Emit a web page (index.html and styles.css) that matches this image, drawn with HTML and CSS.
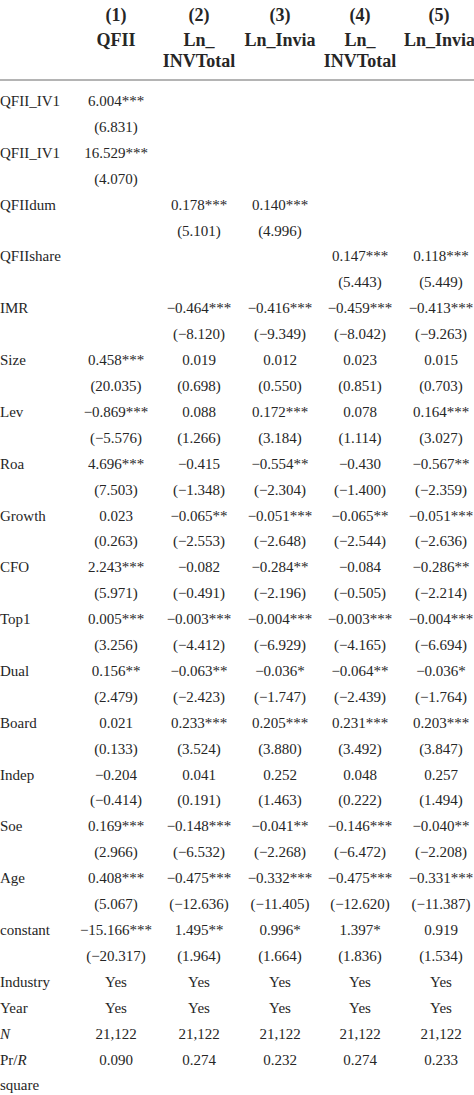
FILE: index.html
```html
<!DOCTYPE html>
<html lang="en">
<head>
<meta charset="utf-8">
<title>Regression table</title>
<link rel="stylesheet" href="styles.css">
</head>
<body>
<div class="table">
  <div class="head">
    <div class="hc"></div>
    <div class="hc"><div class="num">(1)</div><div>QFII</div></div>
    <div class="hc"><div class="num">(2)</div><div>Ln_<br>INVTotal</div></div>
    <div class="hc"><div class="num">(3)</div><div>Ln_Invia</div></div>
    <div class="hc"><div class="num">(4)</div><div>Ln_<br>INVTotal</div></div>
    <div class="hc last"><div class="num">(5)</div><div>Ln_Invia</div></div>
  </div>
  <div class="body">
    <div class="lab">QFII_IV1</div><div>6.004***</div><div></div><div></div><div></div><div class="c5"></div>
    <div class="lab"></div><div>(6.831)</div><div></div><div></div><div></div><div class="c5"></div>
    <div class="lab">QFII_IV1</div><div>16.529***</div><div></div><div></div><div></div><div class="c5"></div>
    <div class="lab"></div><div>(4.070)</div><div></div><div></div><div></div><div class="c5"></div>
    <div class="lab">QFIIdum</div><div></div><div>0.178***</div><div>0.140***</div><div></div><div class="c5"></div>
    <div class="lab"></div><div></div><div>(5.101)</div><div>(4.996)</div><div></div><div class="c5"></div>
    <div class="lab">QFIIshare</div><div></div><div></div><div></div><div>0.147***</div><div class="c5">0.118***</div>
    <div class="lab"></div><div></div><div></div><div></div><div>(5.443)</div><div class="c5">(5.449)</div>
    <div class="lab">IMR</div><div></div><div>−0.464***</div><div>−0.416***</div><div>−0.459***</div><div class="c5">−0.413***</div>
    <div class="lab"></div><div></div><div>(−8.120)</div><div>(−9.349)</div><div>(−8.042)</div><div class="c5">(−9.263)</div>
    <div class="lab">Size</div><div>0.458***</div><div>0.019</div><div>0.012</div><div>0.023</div><div class="c5">0.015</div>
    <div class="lab"></div><div>(20.035)</div><div>(0.698)</div><div>(0.550)</div><div>(0.851)</div><div class="c5">(0.703)</div>
    <div class="lab">Lev</div><div>−0.869***</div><div>0.088</div><div>0.172***</div><div>0.078</div><div class="c5">0.164***</div>
    <div class="lab"></div><div>(−5.576)</div><div>(1.266)</div><div>(3.184)</div><div>(1.114)</div><div class="c5">(3.027)</div>
    <div class="lab">Roa</div><div>4.696***</div><div>−0.415</div><div>−0.554**</div><div>−0.430</div><div class="c5">−0.567**</div>
    <div class="lab"></div><div>(7.503)</div><div>(−1.348)</div><div>(−2.304)</div><div>(−1.400)</div><div class="c5">(−2.359)</div>
    <div class="lab">Growth</div><div>0.023</div><div>−0.065**</div><div>−0.051***</div><div>−0.065**</div><div class="c5">−0.051***</div>
    <div class="lab"></div><div>(0.263)</div><div>(−2.553)</div><div>(−2.648)</div><div>(−2.544)</div><div class="c5">(−2.636)</div>
    <div class="lab">CFO</div><div>2.243***</div><div>−0.082</div><div>−0.284**</div><div>−0.084</div><div class="c5">−0.286**</div>
    <div class="lab"></div><div>(5.971)</div><div>(−0.491)</div><div>(−2.196)</div><div>(−0.505)</div><div class="c5">(−2.214)</div>
    <div class="lab">Top1</div><div>0.005***</div><div>−0.003***</div><div>−0.004***</div><div>−0.003***</div><div class="c5">−0.004***</div>
    <div class="lab"></div><div>(3.256)</div><div>(−4.412)</div><div>(−6.929)</div><div>(−4.165)</div><div class="c5">(−6.694)</div>
    <div class="lab">Dual</div><div>0.156**</div><div>−0.063**</div><div>−0.036*</div><div>−0.064**</div><div class="c5">−0.036*</div>
    <div class="lab"></div><div>(2.479)</div><div>(−2.423)</div><div>(−1.747)</div><div>(−2.439)</div><div class="c5">(−1.764)</div>
    <div class="lab">Board</div><div>0.021</div><div>0.233***</div><div>0.205***</div><div>0.231***</div><div class="c5">0.203***</div>
    <div class="lab"></div><div>(0.133)</div><div>(3.524)</div><div>(3.880)</div><div>(3.492)</div><div class="c5">(3.847)</div>
    <div class="lab">Indep</div><div>−0.204</div><div>0.041</div><div>0.252</div><div>0.048</div><div class="c5">0.257</div>
    <div class="lab"></div><div>(−0.414)</div><div>(0.191)</div><div>(1.463)</div><div>(0.222)</div><div class="c5">(1.494)</div>
    <div class="lab">Soe</div><div>0.169***</div><div>−0.148***</div><div>−0.041**</div><div>−0.146***</div><div class="c5">−0.040**</div>
    <div class="lab"></div><div>(2.966)</div><div>(−6.532)</div><div>(−2.268)</div><div>(−6.472)</div><div class="c5">(−2.208)</div>
    <div class="lab">Age</div><div>0.408***</div><div>−0.475***</div><div>−0.332***</div><div>−0.475***</div><div class="c5">−0.331***</div>
    <div class="lab"></div><div>(5.067)</div><div>(−12.636)</div><div>(−11.405)</div><div>(−12.620)</div><div class="c5">(−11.387)</div>
    <div class="lab">constant</div><div>−15.166***</div><div>1.495**</div><div>0.996*</div><div>1.397*</div><div class="c5">0.919</div>
    <div class="lab"></div><div>(−20.317)</div><div>(1.964)</div><div>(1.664)</div><div>(1.836)</div><div class="c5">(1.534)</div>
    <div class="lab">Industry</div><div>Yes</div><div>Yes</div><div>Yes</div><div>Yes</div><div class="c5">Yes</div>
    <div class="lab">Year</div><div>Yes</div><div>Yes</div><div>Yes</div><div>Yes</div><div class="c5">Yes</div>
    <div class="lab"><i>N</i></div><div>21,122</div><div>21,122</div><div>21,122</div><div>21,122</div><div class="c5">21,122</div>
    <div class="lab">Pr/<i>R</i></div><div>0.090</div><div>0.274</div><div>0.232</div><div>0.274</div><div class="c5">0.233</div>
    <div class="lab">square</div><div></div><div></div><div></div><div></div><div class="c5"></div>
  </div>
</div>
</body>
</html>
```

FILE: styles.css
```css
html, body {
  margin: 0;
  padding: 0;
  background: #ffffff;
  overflow: hidden;
}
body {
  font-family: "Liberation Serif", "DejaVu Serif", serif;
  color: #262626;
}
.table {
  width: 474px;
}
.head,
.body {
  display: grid;
  grid-template-columns: 74px 84px 82px 80px 80px 74px;
}
.head {
  border-bottom: 2px solid #b4b4b4;
  padding-top: 5px;
  padding-bottom: 7px;
  font-weight: bold;
  font-size: 18px;
  line-height: 21px;
  text-align: center;
}
.hc .num {
  margin-bottom: 4px;
}
.hc.last {
  padding-left: 4px;
}
.body {
  padding-top: 8px;
  font-size: 15px;
  grid-auto-rows: 25.92px;
  line-height: 25.92px;
  text-align: center;
  white-space: nowrap;
}
.body .lab {
  text-align: left;
}
.body .c5 {
  padding-left: 8px;
}
```
